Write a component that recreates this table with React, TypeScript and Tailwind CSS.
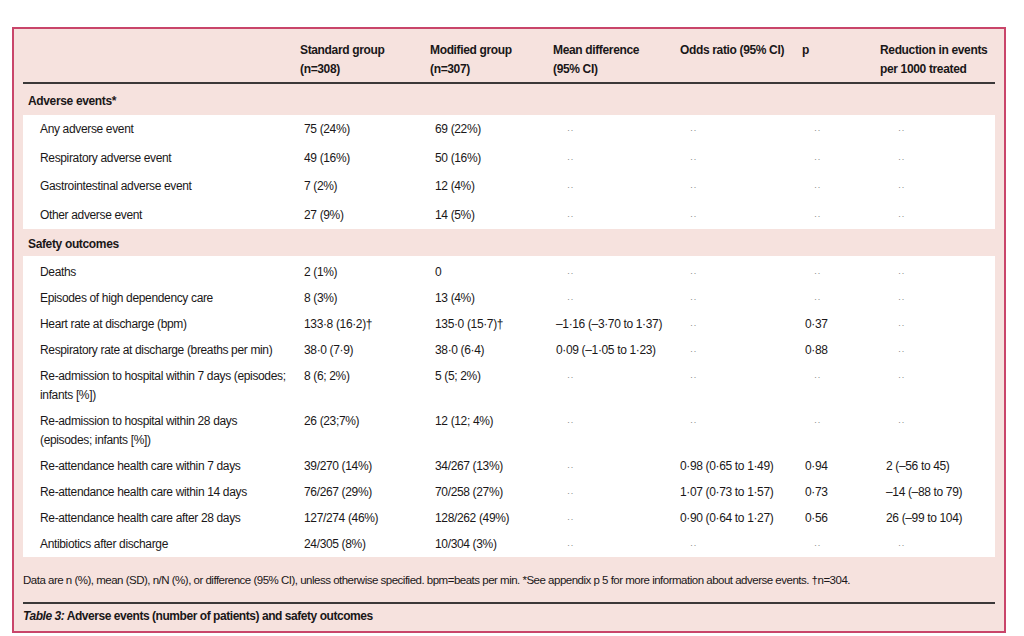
const font = { fontFamily: '"Liberation Sans", Arial, sans-serif' };

const grid = "grid grid-cols-[277px_130px_123px_127px_122px_78px_115px]";

type Row = {
  label: string;
  label2?: string;
  cells: [string, string, string, string, string, string];
};

const adverse: Row[] = [
  { label: "Any adverse event", cells: ["75 (24%)", "69 (22%)", "", "", "", ""] },
  { label: "Respiratory adverse event", cells: ["49 (16%)", "50 (16%)", "", "", "", ""] },
  { label: "Gastrointestinal adverse event", cells: ["7 (2%)", "12 (4%)", "", "", "", ""] },
  { label: "Other adverse event", cells: ["27 (9%)", "14 (5%)", "", "", "", ""] },
];

const safety: Row[] = [
  { label: "Deaths", cells: ["2 (1%)", "0", "", "", "", ""] },
  { label: "Episodes of high dependency care", cells: ["8 (3%)", "13 (4%)", "", "", "", ""] },
  { label: "Heart rate at discharge (bpm)", cells: ["133·8 (16·2)†", "135·0 (15·7)†", "–1·16 (–3·70 to 1·37)", "", "0·37", ""] },
  { label: "Respiratory rate at discharge (breaths per min)", cells: ["38·0 (7·9)", "38·0 (6·4)", "0·09 (–1·05 to 1·23)", "", "0·88", ""] },
  { label: "Re-admission to hospital within 7 days (episodes;", label2: "infants [%])", cells: ["8 (6; 2%)", "5 (5; 2%)", "", "", "", ""] },
  { label: "Re-admission to hospital within 28 days", label2: "(episodes; infants [%])", cells: ["26 (23;7%)", "12 (12; 4%)", "", "", "", ""] },
  { label: "Re-attendance health care within 7 days", cells: ["39/270 (14%)", "34/267 (13%)", "", "0·98 (0·65 to 1·49)", "0·94", "2 (–56 to 45)"] },
  { label: "Re-attendance health care within 14 days", cells: ["76/267 (29%)", "70/258 (27%)", "", "1·07 (0·73 to 1·57)", "0·73", "–14 (–88 to 79)"] },
  { label: "Re-attendance health care after 28 days", cells: ["127/274 (46%)", "128/262 (49%)", "", "0·90 (0·64 to 1·27)", "0·56", "26 (–99 to 104)"] },
  { label: "Antibiotics after discharge", cells: ["24/305 (8%)", "10/304 (3%)", "", "", "", ""] },
];

// left offsets for values / for the ".." placeholders, per column
const valuePad = ["pl-[4px]", "pl-[5px]", "pl-[3px]", "pl-0", "pl-[3px]", "pl-[6px]"];
const dotPad = ["pl-[5px]", "pl-[5px]", "pl-[14px]", "pl-[10px]", "pl-[12px]", "pl-[18px]"];

function Dots() {
  return <span className="text-[9px] tracking-[0.5px] text-[#8a8a8a]">··</span>;
}

function DataRow({ row, tall }: { row: Row; tall?: boolean }) {
  const h = row.label2 ? "h-[45px]" : tall ? "h-[28.5px]" : "h-[26px]";
  return (
    <div className={`${grid} ${h} ${tall ? "pt-[5px]" : "pt-[3.5px]"} items-start`}>
      <div className="pl-[17px] whitespace-nowrap">
        <div>{row.label}</div>
        {row.label2 && <div>{row.label2}</div>}
      </div>
      {row.cells.map((c, i) => (
        <div key={i} className={`whitespace-nowrap ${c ? valuePad[i] : dotPad[i]}`}>
          {c ? c : <Dots />}
        </div>
      ))}
    </div>
  );
}

export default function App() {
  return (
    <div className="h-[636px] w-[1024px] bg-white pt-[27px] pl-[12px]" style={font}>
      <div className="h-[606px] w-[994px] border-2 border-[#c9456a] bg-[#f6e2de] px-[9px] text-[12px] leading-[19px] tracking-[-0.35px] text-[#1a1718]">
        {/* header */}
        <div className={`${grid} pt-[12px] pb-[3px] border-b-2 border-[#3b3838] font-bold whitespace-nowrap`}>
          <div />
          <div>
            <div>Standard group</div>
            <div>(n=308)</div>
          </div>
          <div>
            <div>Modified group</div>
            <div>(n=307)</div>
          </div>
          <div>
            <div>Mean difference</div>
            <div>(95% CI)</div>
          </div>
          <div>Odds ratio (95% CI)</div>
          <div>p</div>
          <div>
            <div>Reduction in events</div>
            <div>per 1000 treated</div>
          </div>
        </div>

        <div className="flex h-[31px] items-center pl-[5px] pt-[4px] font-bold">Adverse events*</div>
        <div className="bg-white">
          {adverse.map((r) => (
            <DataRow key={r.label} row={r} tall />
          ))}
        </div>

        <div className="flex h-[27px] items-center pl-[5px] pt-[4px] font-bold">Safety outcomes</div>
        <div className="bg-white pt-[3px]">
          {safety.map((r) => (
            <DataRow key={r.label} row={r} />
          ))}
        </div>

        <div className="pt-[14px] pb-[12px] border-b-2 border-[#3b3838] whitespace-nowrap text-[11.5px] tracking-[-0.5px]">
          Data are n (%), mean (SD), n/N (%), or difference (95% CI), unless otherwise specified. bpm=beats per min. *See appendix p 5 for more information about adverse events. †n=304.
        </div>
        <div className="pt-[3px] font-bold tracking-[-0.45px]">
          <span className="italic">Table 3:</span> Adverse events (number of patients) and safety outcomes
        </div>
      </div>
    </div>
  );
}
